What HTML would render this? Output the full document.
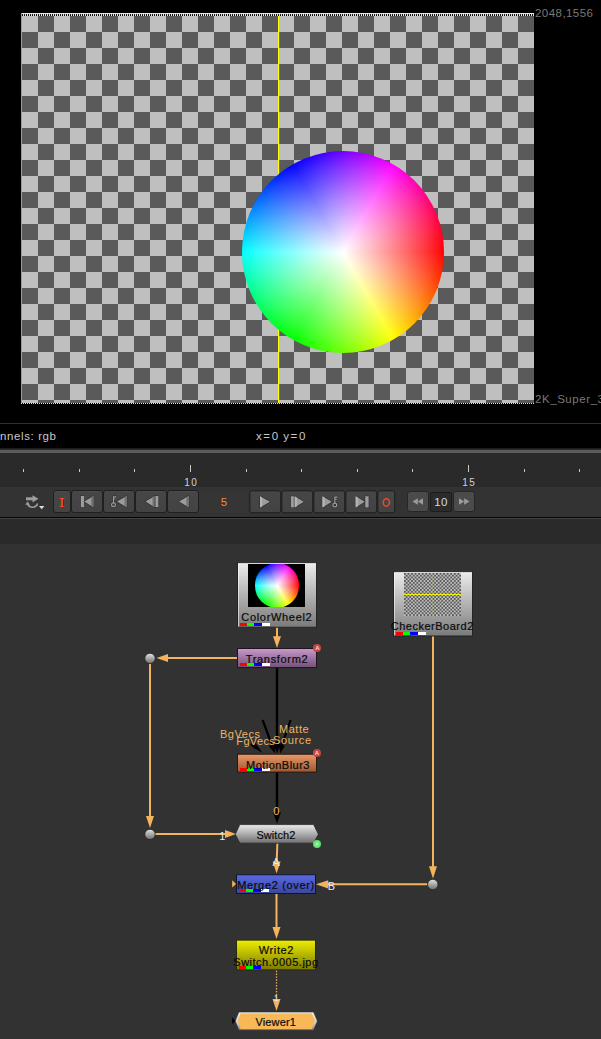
<!DOCTYPE html>
<html>
<head>
<meta charset="utf-8">
<title>Nuke</title>
<style>
html,body{margin:0;padding:0;background:#323232;}
body{width:601px;height:1039px;position:relative;overflow:hidden;font-family:"Liberation Sans",sans-serif;}
.abs{position:absolute;}
#viewer{left:0;top:0;width:601px;height:448px;background:#000;}
#checker{left:22px;top:16px;width:512px;height:387px;
  background-color:#5a5a5a;
  background-image:conic-gradient(#5a5a5a 25%,#bfbfbf 0 50%,#5a5a5a 0 75%,#bfbfbf 0);
  background-size:32px 32px;background-position:0 0;}
#dotTop{left:21px;top:13px;width:513px;height:3px;background:linear-gradient(#e8e8e8 0 1px,transparent 1px),repeating-linear-gradient(90deg,#e0e0e0 0 1px,#101010 1px 2px);}
#bleft{left:21px;top:13px;width:1px;height:390px;background:#9a9a9a;}
#dotBot{left:21px;top:403px;width:513px;height:1px;background:repeating-linear-gradient(90deg,#ddd 0 1px,#000 1px 2px);}
#yline{left:278px;top:16px;width:1px;height:387px;background:#ffff00;box-shadow:0.4px 0 0 rgba(255,255,0,0.4);}
#wheel{left:242px;top:151px;width:202px;height:202px;border-radius:50%;
  background:radial-gradient(closest-side,rgba(255,255,255,1.000) 0%,rgba(255,255,255,0.955) 5%,rgba(255,255,255,0.910) 10%,rgba(255,255,255,0.818) 20%,rgba(255,255,255,0.725) 30%,rgba(255,255,255,0.631) 40%,rgba(255,255,255,0.536) 50%,rgba(255,255,255,0.438) 60%,rgba(255,255,255,0.338) 70%,rgba(255,255,255,0.235) 80%,rgba(255,255,255,0.159) 87%,rgba(255,255,255,0.091) 93%,rgba(255,255,255,0.043) 97%,rgba(255,255,255,0.016) 99%,rgba(255,255,255,0.000) 100%),conic-gradient(from 90deg,rgb(255,0,0) 0deg,rgb(255,30,0) 10deg,rgb(255,68,0) 20deg,rgb(255,111,0) 30deg,rgb(255,157,0) 40deg,rgb(255,205,0) 50deg,rgb(255,255,0) 60deg,rgb(205,255,0) 70deg,rgb(157,255,0) 80deg,rgb(111,255,0) 90deg,rgb(68,255,0) 100deg,rgb(30,255,0) 110deg,rgb(0,255,0) 120deg,rgb(0,255,30) 130deg,rgb(0,255,68) 140deg,rgb(0,255,111) 150deg,rgb(0,255,157) 160deg,rgb(0,255,205) 170deg,rgb(0,255,255) 180deg,rgb(0,205,255) 190deg,rgb(0,157,255) 200deg,rgb(0,111,255) 210deg,rgb(0,68,255) 220deg,rgb(0,30,255) 230deg,rgb(0,0,255) 240deg,rgb(30,0,255) 250deg,rgb(68,0,255) 260deg,rgb(111,0,255) 270deg,rgb(157,0,255) 280deg,rgb(205,0,255) 290deg,rgb(255,0,255) 300deg,rgb(255,0,205) 310deg,rgb(255,0,157) 320deg,rgb(255,0,111) 330deg,rgb(255,0,68) 340deg,rgb(255,0,30) 350deg,rgb(255,0,0) 360deg);}
.vtxt{color:#787878;font-size:11.5px;white-space:nowrap;line-height:12px;}
#infoline{left:0;top:423px;width:601px;height:1px;background:#303030;}
.info{color:#c8c8c8;font-size:11.5px;white-space:nowrap;line-height:12px;}
#sep1{left:0;top:448px;width:601px;height:5px;background:linear-gradient(#1c1c1c 0 1px,#2a2a2a 1px 2px,#5c5c5c 2px 5px);}
#timeline{left:0;top:453px;width:601px;height:34px;background:#2a2a2a;}
#controls{left:0;top:487px;width:601px;height:30px;background:#333;}
#sep2{left:0;top:517px;width:601px;height:2px;background:linear-gradient(#050505 0 1px,#424242 1px 2px);}
#tabbar{left:0;top:519px;width:601px;height:25px;background:#2a2a2a;}
#graph{left:0;top:544px;width:601px;height:495px;background:#323232;}
.tick{width:1px;background:#c8c8c8;}
.tlabel{color:#cfd3d8;font-size:10px;line-height:10px;white-space:nowrap;letter-spacing:1.3px;text-indent:1.3px;}

.btn{background:linear-gradient(#4b4b4b 0 1px,#464646 1px,#434343 100%);border:1px solid #1f1f1f;border-radius:3px;}
.btn svg,.sbtn svg{position:absolute;left:0;top:0;}
.sbtn{background:#4b4b4b;border:1px solid #262626;border-radius:3px;}

#wheel2{background:radial-gradient(closest-side,rgba(255,255,255,1.000) 0%,rgba(255,255,255,0.955) 5%,rgba(255,255,255,0.910) 10%,rgba(255,255,255,0.818) 20%,rgba(255,255,255,0.725) 30%,rgba(255,255,255,0.631) 40%,rgba(255,255,255,0.536) 50%,rgba(255,255,255,0.438) 60%,rgba(255,255,255,0.338) 70%,rgba(255,255,255,0.235) 80%,rgba(255,255,255,0.159) 87%,rgba(255,255,255,0.091) 93%,rgba(255,255,255,0.043) 97%,rgba(255,255,255,0.016) 99%,rgba(255,255,255,0.000) 100%),conic-gradient(from 90deg,rgb(255,0,0) 0deg,rgb(255,30,0) 10deg,rgb(255,68,0) 20deg,rgb(255,111,0) 30deg,rgb(255,157,0) 40deg,rgb(255,205,0) 50deg,rgb(255,255,0) 60deg,rgb(205,255,0) 70deg,rgb(157,255,0) 80deg,rgb(111,255,0) 90deg,rgb(68,255,0) 100deg,rgb(30,255,0) 110deg,rgb(0,255,0) 120deg,rgb(0,255,30) 130deg,rgb(0,255,68) 140deg,rgb(0,255,111) 150deg,rgb(0,255,157) 160deg,rgb(0,255,205) 170deg,rgb(0,255,255) 180deg,rgb(0,205,255) 190deg,rgb(0,157,255) 200deg,rgb(0,111,255) 210deg,rgb(0,68,255) 220deg,rgb(0,30,255) 230deg,rgb(0,0,255) 240deg,rgb(30,0,255) 250deg,rgb(68,0,255) 260deg,rgb(111,0,255) 270deg,rgb(157,0,255) 280deg,rgb(205,0,255) 290deg,rgb(255,0,255) 300deg,rgb(255,0,205) 310deg,rgb(255,0,157) 320deg,rgb(255,0,111) 330deg,rgb(255,0,68) 340deg,rgb(255,0,30) 350deg,rgb(255,0,0) 360deg);}
#cthumb{background-color:#5a5a5a;background-image:conic-gradient(#c0c0c0 25%,#5a5a5a 0 50%,#c0c0c0 0 75%,#5a5a5a 0);background-size:3.5625px 3.5833px;}
</style>
</head>
<body>
<div id="viewer" class="abs"></div>
<div id="dotTop" class="abs"></div>
<div id="checker" class="abs"></div>
<div id="dotBot" class="abs"></div>
<div id="bleft" class="abs"></div>
<div id="yline" class="abs"></div>
<div id="wheel" class="abs"></div>
<div class="abs vtxt" style="left:535px;top:7px;letter-spacing:0.45px;">2048,1556</div>
<div class="abs vtxt" style="left:535px;top:393px;letter-spacing:0.56px;">2K_Super_35</div>
<div id="infoline" class="abs"></div>
<div class="abs info" style="left:-20.4px;top:430px;letter-spacing:0.61px;">channels: rgb</div>
<div class="abs info" style="left:256px;top:430px;letter-spacing:1.6px;word-spacing:-1.2px;">x=0 y=0</div>
<div id="sep1" class="abs"></div>
<div id="timeline" class="abs"></div>
<div id="controls" class="abs"></div>
<div id="sep2" class="abs"></div>
<div id="tabbar" class="abs"></div>
<div id="graph" class="abs"></div>
<div class="abs tick" style="left:23px;top:469px;height:3px;"></div>
<div class="abs tick" style="left:79px;top:469px;height:3px;"></div>
<div class="abs tick" style="left:134px;top:469px;height:3px;"></div>
<div class="abs tick" style="left:246px;top:469px;height:3px;"></div>
<div class="abs tick" style="left:301px;top:469px;height:3px;"></div>
<div class="abs tick" style="left:357px;top:469px;height:3px;"></div>
<div class="abs tick" style="left:412px;top:469px;height:3px;"></div>
<div class="abs tick" style="left:524px;top:469px;height:3px;"></div>
<div class="abs tick" style="left:579px;top:469px;height:3px;"></div>
<div class="abs tick" style="left:190px;top:465px;height:7px;"></div>
<div class="abs tlabel" style="left:170px;top:477.5px;width:41px;text-align:center;">10</div>
<div class="abs tick" style="left:468px;top:465px;height:7px;"></div>
<div class="abs tlabel" style="left:448px;top:477.5px;width:41px;text-align:center;">15</div>

<!--BS-->
<div class="abs btn" style="left:53px;top:490px;width:16px;height:21px;"><svg width="16" height="21" viewBox="0 0 16 21"><path d="M5.9,7.6h4.4 M5.9,15.4h4.4" stroke="#f04a1e" stroke-width="1.2" fill="none"/><path d="M9.2,8.4v7" stroke="#5a1430" stroke-width="1" fill="none"/><path d="M8.1,7.6v7.8" stroke="#f04a1e" stroke-width="1.7" fill="none"/></svg></div>
<div class="abs btn" style="left:71px;top:490px;width:30px;height:21px;"><svg width="30" height="21" viewBox="0 0 30 21"><rect x="8.8" y="5.0" width="3.4" height="11.2" fill="#9c9c9c" stroke="#2b2b2b" stroke-width="1.2" paint-order="stroke" stroke-linejoin="round"/><polygon points="12.2,10.6 21.4,5.0 21.4,16.2" fill="#9c9c9c" stroke="#2b2b2b" stroke-width="1.2" paint-order="stroke" stroke-linejoin="round"/><polygon points="19.2,6.3 21.4,5.0 21.4,16.2 19.2,14.899999999999999" fill="#727272"/></svg></div>
<div class="abs btn" style="left:103px;top:490px;width:30px;height:21px;"><svg width="30" height="21" viewBox="0 0 30 21"><path d="M9.5,12.0 V5.200000000000001 M9.5,5.800000000000001 h2.6 M9.5,8.0 h2" stroke="#2b2b2b" stroke-width="2.4" fill="none"/><circle cx="9.5" cy="13.8" r="1.9" fill="none" stroke="#2b2b2b" stroke-width="2.4"/><circle cx="9.5" cy="13.8" r="1.9" fill="none" stroke="#9c9c9c" stroke-width="1.2"/><path d="M9.5,12.0 V5.200000000000001 M9.5,5.800000000000001 h2.6 M9.5,8.0 h2" stroke="#9c9c9c" stroke-width="1.2" fill="none"/><polygon points="13,10.6 22.7,5.0 22.7,16.2" fill="#9c9c9c" stroke="#2b2b2b" stroke-width="1.2" paint-order="stroke" stroke-linejoin="round"/><polygon points="20.5,6.3 22.7,5.0 22.7,16.2 20.5,14.899999999999999" fill="#727272"/></svg></div>
<div class="abs btn" style="left:135px;top:490px;width:30px;height:21px;"><svg width="30" height="21" viewBox="0 0 30 21"><polygon points="9.5,10.6 18.7,5.0 18.7,16.2" fill="#9c9c9c" stroke="#2b2b2b" stroke-width="1.2" paint-order="stroke" stroke-linejoin="round"/><polygon points="16.5,6.3 18.7,5.0 18.7,16.2 16.5,14.899999999999999" fill="#727272"/><rect x="19.4" y="5.0" width="3" height="11.2" fill="#9c9c9c" stroke="#2b2b2b" stroke-width="1.2" paint-order="stroke" stroke-linejoin="round"/></svg></div>
<div class="abs btn" style="left:167px;top:490px;width:30px;height:21px;"><svg width="30" height="21" viewBox="0 0 30 21"><polygon points="11,10.6 20.6,5.0 20.6,16.2" fill="#9c9c9c" stroke="#2b2b2b" stroke-width="1.2" paint-order="stroke" stroke-linejoin="round"/><polygon points="18.400000000000002,6.3 20.6,5.0 20.6,16.2 18.400000000000002,14.899999999999999" fill="#727272"/></svg></div>
<div class="abs btn" style="transform:translate(0.25px,0.25px);left:249px;top:490px;width:30px;height:21px;"><svg width="30" height="21" viewBox="0 0 30 21"><polygon points="19.75,10.6 9.75,5.0 9.75,16.2" fill="#9c9c9c" stroke="#2b2b2b" stroke-width="1.2" paint-order="stroke" stroke-linejoin="round"/><polygon points="11.95,6.3 9.75,5.0 9.75,16.2 11.95,14.899999999999999" fill="#b4b4b4"/></svg></div>
<div class="abs btn" style="transform:translate(0.25px,0.25px);left:281px;top:490px;width:30px;height:21px;"><svg width="30" height="21" viewBox="0 0 30 21"><rect x="8.6" y="5.0" width="3" height="11.2" fill="#9c9c9c" stroke="#2b2b2b" stroke-width="1.2" paint-order="stroke" stroke-linejoin="round"/><polygon points="21.6,10.6 12.4,5.0 12.4,16.2" fill="#9c9c9c" stroke="#2b2b2b" stroke-width="1.2" paint-order="stroke" stroke-linejoin="round"/><polygon points="14.600000000000001,6.3 12.4,5.0 12.4,16.2 14.600000000000001,14.899999999999999" fill="#b4b4b4"/></svg></div>
<div class="abs btn" style="transform:translate(0.25px,0.25px);left:313px;top:490px;width:30px;height:21px;"><svg width="30" height="21" viewBox="0 0 30 21"><polygon points="17.6,10.6 8.2,5.0 8.2,16.2" fill="#9c9c9c" stroke="#2b2b2b" stroke-width="1.2" paint-order="stroke" stroke-linejoin="round"/><polygon points="10.399999999999999,6.3 8.2,5.0 8.2,16.2 10.399999999999999,14.899999999999999" fill="#b4b4b4"/><path d="M20.6,12.0 V5.200000000000001 M20.6,5.800000000000001 h2.6 M20.6,8.0 h2" stroke="#2b2b2b" stroke-width="2.4" fill="none"/><circle cx="20.6" cy="13.8" r="1.9" fill="none" stroke="#2b2b2b" stroke-width="2.4"/><circle cx="20.6" cy="13.8" r="1.9" fill="none" stroke="#9c9c9c" stroke-width="1.2"/><path d="M20.6,12.0 V5.200000000000001 M20.6,5.800000000000001 h2.6 M20.6,8.0 h2" stroke="#9c9c9c" stroke-width="1.2" fill="none"/></svg></div>
<div class="abs btn" style="transform:translate(0.25px,0.25px);left:345px;top:490px;width:30px;height:21px;"><svg width="30" height="21" viewBox="0 0 30 21"><polygon points="18.6,10.6 9.4,5.0 9.4,16.2" fill="#9c9c9c" stroke="#2b2b2b" stroke-width="1.2" paint-order="stroke" stroke-linejoin="round"/><polygon points="11.600000000000001,6.3 9.4,5.0 9.4,16.2 11.600000000000001,14.899999999999999" fill="#b4b4b4"/><rect x="19" y="5.0" width="3.4" height="11.2" fill="#9c9c9c" stroke="#2b2b2b" stroke-width="1.2" paint-order="stroke" stroke-linejoin="round"/></svg></div>
<div class="abs btn" style="transform:translate(0.25px,0.25px);left:377px;top:490px;width:16px;height:21px;"><svg width="16" height="21" viewBox="0 0 16 21"><ellipse cx="8.1" cy="11.2" rx="3.1" ry="3.7" fill="none" stroke="#f04a1e" stroke-width="1.5"/></svg></div>
<div class="abs sbtn" style="left:407px;top:491px;width:20px;height:19px;"><svg width="20" height="19" viewBox="0 0 20 19"><polygon points="4.6,9.5 9.8,6.3 9.8,12.7" fill="#9c9c9c"/><polygon points="9.8,9.5 15,6.3 15,12.7" fill="#9c9c9c"/></svg></div>
<div class="abs" style="left:430px;top:492px;width:20px;height:18px;background:#2b2b2b;border:1px solid #1c1c1c;border-radius:2px;color:#d4dae2;font-size:11.5px;line-height:18px;text-align:center;letter-spacing:0.3px;">10</div>
<div class="abs sbtn" style="left:453px;top:491px;width:20px;height:19px;"><svg width="20" height="19" viewBox="0 0 20 19"><polygon points="10.2,9.5 5,6.3 5,12.7" fill="#9c9c9c"/><polygon points="15.4,9.5 10.2,6.3 10.2,12.7" fill="#9c9c9c"/></svg></div>
<div class="abs" style="left:200px;top:491px;width:48px;height:22px;background:#353535;color:#f0902c;font-size:11.5px;line-height:23px;text-align:center;">5</div>
<svg class="abs" style="left:24px;top:492px;" width="24" height="20" viewBox="0 0 24 20">
<path d="M2,6.8 H9" stroke="#9c9c9c" stroke-width="3" fill="none"/>
<polygon points="8.5,3.2 14.5,6.8 8.5,10.4" fill="#9c9c9c"/>
<path d="M3.5,11.5 A5.2,5.2 0 0 0 13.5,11.5" stroke="#9c9c9c" stroke-width="1.7" fill="none"/>
<polygon points="1.2,12.7 3.6,9.4 6,12.7" fill="#9c9c9c"/>
<polygon points="15,14 20.4,14 17.7,17.2" fill="#dcdcdc"/>
</svg>
<!--BE-->
<!--NS-->
<svg class="abs" style="left:0;top:544px;" width="601" height="495" viewBox="0 544 601 495">
<defs>
<linearGradient id="gDot" x1="0" y1="0" x2="0" y2="1"><stop offset="0" stop-color="#e4e4e4"/><stop offset="1" stop-color="#6c6c6c"/></linearGradient>
<linearGradient id="gSw" x1="0" y1="0" x2="0" y2="1"><stop offset="0" stop-color="#ececec"/><stop offset="1" stop-color="#6e6e6e"/></linearGradient>
<radialGradient id="gGreen" cx="0.5" cy="0.5" r="0.5"><stop offset="0" stop-color="#dcffdc"/><stop offset="0.4" stop-color="#74ec80"/><stop offset="1" stop-color="#5cdc6c"/></radialGradient>
<linearGradient id="gVw" x1="0" y1="0" x2="0" y2="1"><stop offset="0" stop-color="#ececec"/><stop offset="0.6" stop-color="#d0d0d0"/><stop offset="1" stop-color="#808080"/></linearGradient>
</defs>
<line x1="277" y1="627" x2="277" y2="638" stroke="#f5b35b" stroke-width="2" />
<polygon points="273,636.3 281,636.3 277,648" fill="#f5b35b" />
<line x1="237" y1="658" x2="167" y2="658" stroke="#f5b35b" stroke-width="2" />
<polygon points="168,654 168,662 156.5,658" fill="#f5b35b" />
<line x1="150" y1="663" x2="150" y2="817" stroke="#f5b35b" stroke-width="2" />
<polygon points="146,816 154,816 150,828" fill="#f5b35b" />
<line x1="155" y1="834" x2="226" y2="834" stroke="#f5b35b" stroke-width="2" />
<polygon points="225,830 225,838 236,834" fill="#f5b35b" />
<line x1="277" y1="667" x2="277" y2="745" stroke="#000" stroke-width="2.4" />
<polygon points="273,742.6 281,742.6 277,753.8" fill="#000" />
<line x1="262.6" y1="720" x2="272.3" y2="746" stroke="#000" stroke-width="2.2" />
<polygon points="268.8,746 275,743.6 274.8,753.5" fill="#000" />
<line x1="290.6" y1="720" x2="281.5" y2="746" stroke="#000" stroke-width="2.2" />
<polygon points="278.6,743.6 284.8,746 280.2,753.5" fill="#000" />
<polygon points="252,746.6 255.5,743.2 262.5,753" fill="#000" />
<line x1="251" y1="744" x2="256" y2="748.5" stroke="#000" stroke-width="2.2" />
<line x1="277" y1="772" x2="277" y2="814" stroke="#000" stroke-width="2.4" />
<polygon points="273,812.3 281,812.3 277,823.8" fill="#000" />
<line x1="277.4" y1="843" x2="276.6" y2="863" stroke="#f5b35b" stroke-width="2" />
<polygon points="272.6,861.5 280.6,861.5 276.6,873.5" fill="#f5b35b" />
<line x1="276.5" y1="893" x2="276.5" y2="928" stroke="#f5b35b" stroke-width="2" />
<polygon points="272.5,927 280.5,927 276.5,939" fill="#f5b35b" />
<line x1="276.5" y1="970.6" x2="276.5" y2="1000" stroke="#f5b35b" stroke-width="1.3" stroke-dasharray="1.4 1.5"/>
<polygon points="272.5,999 280.5,999 276.5,1011" fill="#f5b35b" />
<line x1="433" y1="636" x2="433" y2="867" stroke="#f5b35b" stroke-width="2" />
<polygon points="429,866.3 437,866.3 433,878.5" fill="#f5b35b" />
<line x1="427.5" y1="884.3" x2="327" y2="884.3" stroke="#f5b35b" stroke-width="2" />
<polygon points="328.2,880.2 328.2,888.4 316,884.3" fill="#f5b35b" />
<polygon points="232.2,880.3 232.2,887.6 236,884" fill="#f5b35b" />
<circle cx="150" cy="658.4" r="5.2" fill="url(#gDot)" stroke="#222" stroke-width="0.8"/>
<circle cx="150" cy="834.4" r="5.2" fill="url(#gDot)" stroke="#222" stroke-width="0.8"/>
<circle cx="432.8" cy="884.5" r="5.2" fill="url(#gDot)" stroke="#222" stroke-width="0.8"/>
<polygon points="235.3,834.3 239.8,824.6 313.6,824.6 318.4,834.3 313.6,843.2 239.8,843.2" fill="url(#gSw)" stroke="#2a2a2a" stroke-width="0.8"/>
<circle cx="317" cy="844" r="4" fill="url(#gGreen)"/>
<polygon points="232.2,1017.3 232.2,1024.3 235.4,1021" fill="#000" />
<polygon points="235.2,1021 238.8,1012 313.6,1012 317.4,1021 313.6,1030.2 238.8,1030.2" fill="url(#gVw)" stroke="#2a2a2a" stroke-width="0.6"/>
<polygon points="237.6,1021 240.6,1013.6 311.8,1013.6 315,1021 311.8,1029 240.6,1029" fill="#f8b858"/>
</svg>
<svg class="abs" style="left:0;top:544px;" width="601" height="495" viewBox="0 544 601 495"><defs><linearGradient id="g0" x1="0" y1="0" x2="0" y2="1"><stop offset="0" stop-color="#ececec"/><stop offset="1" stop-color="#7a7a7a"/></linearGradient></defs><rect x="237.5" y="562.75" width="79" height="64.5" fill="url(#g0)" stroke="#242424" stroke-width="1"/><path d="M238.5,626.75 V563.75 H316" fill="none" stroke="rgba(255,255,255,0.55)" stroke-width="1"/></svg>
<div class="abs" style="left:248px;top:564px;width:57px;height:43px;background:#000;overflow:hidden;"><div id="wheel2" style="position:absolute;left:6.7px;top:-0.7px;width:44.4px;height:44.4px;border-radius:50%;"></div></div>
<div class="abs" style="left:240.0px;top:623px;width:7.0px;height:3px;background:#f00;"></div><div class="abs" style="left:247.0px;top:623px;width:7.0px;height:3px;background:#0f0;"></div><div class="abs" style="left:254.0px;top:623px;width:8.0px;height:3px;background:#00f;"></div><div class="abs" style="left:262.0px;top:623px;width:8.2px;height:3px;background:#fff;"></div>
<svg class="abs" style="left:0;top:544px;" width="601" height="495" viewBox="0 544 601 495"><defs><linearGradient id="g1" x1="0" y1="0" x2="0" y2="1"><stop offset="0" stop-color="#ececec"/><stop offset="1" stop-color="#7a7a7a"/></linearGradient></defs><rect x="393.5" y="571.75" width="79" height="64.25" fill="url(#g1)" stroke="#242424" stroke-width="1"/><path d="M394.5,635.5 V572.75 H472" fill="none" stroke="rgba(255,255,255,0.55)" stroke-width="1"/></svg>
<div class="abs" id="cthumb" style="left:404px;top:573px;width:57px;height:43px;"></div>
<div class="abs" style="left:432px;top:573px;width:1px;height:43px;background:rgba(200,200,80,0.22);"></div>
<div class="abs" style="left:404px;top:594px;width:57px;height:1px;background:#f0f000;"></div>
<div class="abs" style="left:396.0px;top:632px;width:7.0px;height:3px;background:#f00;"></div><div class="abs" style="left:403.0px;top:632px;width:7.0px;height:3px;background:#0f0;"></div><div class="abs" style="left:410.0px;top:632px;width:8.0px;height:3px;background:#00f;"></div><div class="abs" style="left:418.0px;top:632px;width:8.2px;height:3px;background:#fff;"></div>
<svg class="abs" style="left:0;top:544px;" width="601" height="495" viewBox="0 544 601 495"><defs><linearGradient id="g2" x1="0" y1="0" x2="0" y2="1"><stop offset="0" stop-color="#c89aca"/><stop offset="1" stop-color="#74507a"/></linearGradient></defs><rect x="237.5" y="648.5" width="79" height="19.100000000000023" fill="url(#g2)" stroke="#20141f" stroke-width="1"/></svg>
<div class="abs" style="left:240.0px;top:663px;width:7.0px;height:3px;background:#f00;"></div><div class="abs" style="left:247.0px;top:663px;width:7.0px;height:3px;background:#0f0;"></div><div class="abs" style="left:254.0px;top:663px;width:8.0px;height:3px;background:#00f;"></div><div class="abs" style="left:262.0px;top:663px;width:8.2px;height:3px;background:#fff;"></div>
<svg class="abs" style="left:0;top:544px;" width="601" height="495" viewBox="0 544 601 495"><defs><linearGradient id="g3" x1="0" y1="0" x2="0" y2="1"><stop offset="0" stop-color="#ea9a6a"/><stop offset="1" stop-color="#9a5830"/></linearGradient></defs><rect x="237.5" y="754.2" width="79" height="17.899999999999977" fill="url(#g3)" stroke="#2a180c" stroke-width="1"/></svg>
<div class="abs" style="left:240.0px;top:768px;width:7.0px;height:3px;background:#f00;"></div><div class="abs" style="left:247.0px;top:768px;width:7.0px;height:3px;background:#0f0;"></div><div class="abs" style="left:254.0px;top:768px;width:8.0px;height:3px;background:#00f;"></div><div class="abs" style="left:262.0px;top:768px;width:8.2px;height:3px;background:#fff;"></div>
<svg class="abs" style="left:0;top:544px;" width="601" height="495" viewBox="0 544 601 495"><defs><linearGradient id="g4" x1="0" y1="0" x2="0" y2="1"><stop offset="0" stop-color="#5a6ae0"/><stop offset="1" stop-color="#3846a0"/></linearGradient></defs><rect x="236.5" y="874.75" width="79" height="18.75" fill="url(#g4)" stroke="#10142c" stroke-width="1"/></svg>
<div class="abs" style="left:239.0px;top:889px;width:7.0px;height:3px;background:#f00;"></div><div class="abs" style="left:246.0px;top:889px;width:7.0px;height:3px;background:#0f0;"></div><div class="abs" style="left:253.0px;top:889px;width:8.0px;height:3px;background:#00f;"></div><div class="abs" style="left:261.0px;top:889px;width:8.2px;height:3px;background:#fff;"></div>
<svg class="abs" style="left:0;top:544px;" width="601" height="495" viewBox="0 544 601 495"><defs><linearGradient id="g5" x1="0" y1="0" x2="0" y2="1"><stop offset="0" stop-color="#eeee00"/><stop offset="1" stop-color="#7a7a00"/></linearGradient></defs><rect x="236.5" y="940.1" width="79" height="29.799999999999955" fill="url(#g5)" stroke="#28280a" stroke-width="1"/></svg>
<div class="abs" style="left:239.0px;top:966px;width:7.0px;height:3px;background:#f00;"></div><div class="abs" style="left:246.0px;top:966px;width:7.0px;height:3px;background:#0f0;"></div><div class="abs" style="left:253.0px;top:966px;width:8.0px;height:3px;background:#00f;"></div>
<div class="abs" style="left:313.3px;top:644.3px;width:8px;height:8px;border-radius:50%;background:#c44646;color:#f6d6d6;font-size:6px;line-height:8px;text-align:center;font-weight:bold;">A</div>
<div class="abs" style="left:313px;top:749.3px;width:8px;height:8px;border-radius:50%;background:#c44646;color:#f6d6d6;font-size:6px;line-height:8px;text-align:center;font-weight:bold;">A</div>
<div class="abs" style="left:241.30px;top:611.19px;font-size:11px;line-height:12px;letter-spacing:0.681px;color:#0a0a0a;white-space:pre;-webkit-text-stroke:0.2px #0a0a0a;">ColorWheel2</div>
<div class="abs" style="left:390.70px;top:620.19px;font-size:11px;line-height:12px;letter-spacing:0.514px;color:#0a0a0a;white-space:pre;-webkit-text-stroke:0.2px #0a0a0a;">CheckerBoard2</div>
<div class="abs" style="left:245.70px;top:653.19px;font-size:11px;line-height:12px;letter-spacing:0.686px;color:#0a0a0a;white-space:pre;-webkit-text-stroke:0.2px #0a0a0a;">Transform2</div>
<div class="abs" style="left:246.00px;top:758.59px;font-size:11px;line-height:12px;letter-spacing:0.470px;color:#0a0a0a;white-space:pre;-webkit-text-stroke:0.2px #0a0a0a;">MotionBlur3</div>
<div class="abs" style="left:256.40px;top:828.89px;font-size:11px;line-height:12px;letter-spacing:0.078px;color:#0a0a0a;white-space:pre;-webkit-text-stroke:0.2px #0a0a0a;">Switch2</div>
<div class="abs" style="left:237.20px;top:879.49px;font-size:11px;line-height:12px;letter-spacing:0.660px;color:#0a0a0a;white-space:pre;-webkit-text-stroke:0.2px #0a0a0a;">Merge2 (over)</div>
<div class="abs" style="left:258.80px;top:944.19px;font-size:11px;line-height:12px;letter-spacing:0.601px;color:#0a0a0a;white-space:pre;-webkit-text-stroke:0.2px #0a0a0a;">Write2</div>
<div class="abs" style="left:233.30px;top:956.09px;font-size:11px;line-height:12px;letter-spacing:0.509px;color:#0a0a0a;white-space:pre;-webkit-text-stroke:0.2px #0a0a0a;">Switch.0005.jpg</div>
<div class="abs" style="left:255.40px;top:1016.19px;font-size:11px;line-height:12px;letter-spacing:0.176px;color:#0a0a0a;white-space:pre;-webkit-text-stroke:0.2px #0a0a0a;">Viewer1</div>
<div class="abs" style="left:220.00px;top:727.89px;font-size:11px;line-height:12px;letter-spacing:0.537px;color:#f0b464;white-space:pre;">BgVecs</div>
<div class="abs" style="left:236.30px;top:734.79px;font-size:11px;line-height:12px;letter-spacing:0.362px;color:#f0b464;white-space:pre;">FgVecs</div>
<div class="abs" style="left:279.00px;top:722.89px;font-size:11px;line-height:12px;letter-spacing:0.546px;color:#f0b464;white-space:pre;">Matte</div>
<div class="abs" style="left:273.00px;top:734.19px;font-size:11px;line-height:12px;letter-spacing:0.628px;color:#f0b464;white-space:pre;">Source</div>
<div class="abs" style="left:273.34px;top:805.19px;font-size:11px;line-height:12px;letter-spacing:0.000px;color:#f0b464;white-space:pre;">0</div>
<div class="abs" style="left:219.24px;top:829.79px;font-size:11px;line-height:12px;letter-spacing:0.000px;color:#e4ecf4;white-space:pre;">1</div>
<div class="abs" style="left:272.58px;top:856.39px;font-size:11px;line-height:12px;letter-spacing:0.000px;color:#e4ecf4;white-space:pre;">A</div>
<div class="abs" style="left:327.63px;top:879.79px;font-size:11px;line-height:12px;letter-spacing:0.000px;color:#e4ecf4;white-space:pre;">B</div>
<div class="abs" style="left:273.79px;top:992.88px;font-size:9px;line-height:10px;letter-spacing:0.000px;color:#e4ecf4;white-space:pre;">1</div>
<!--NE-->
</body>
</html>
